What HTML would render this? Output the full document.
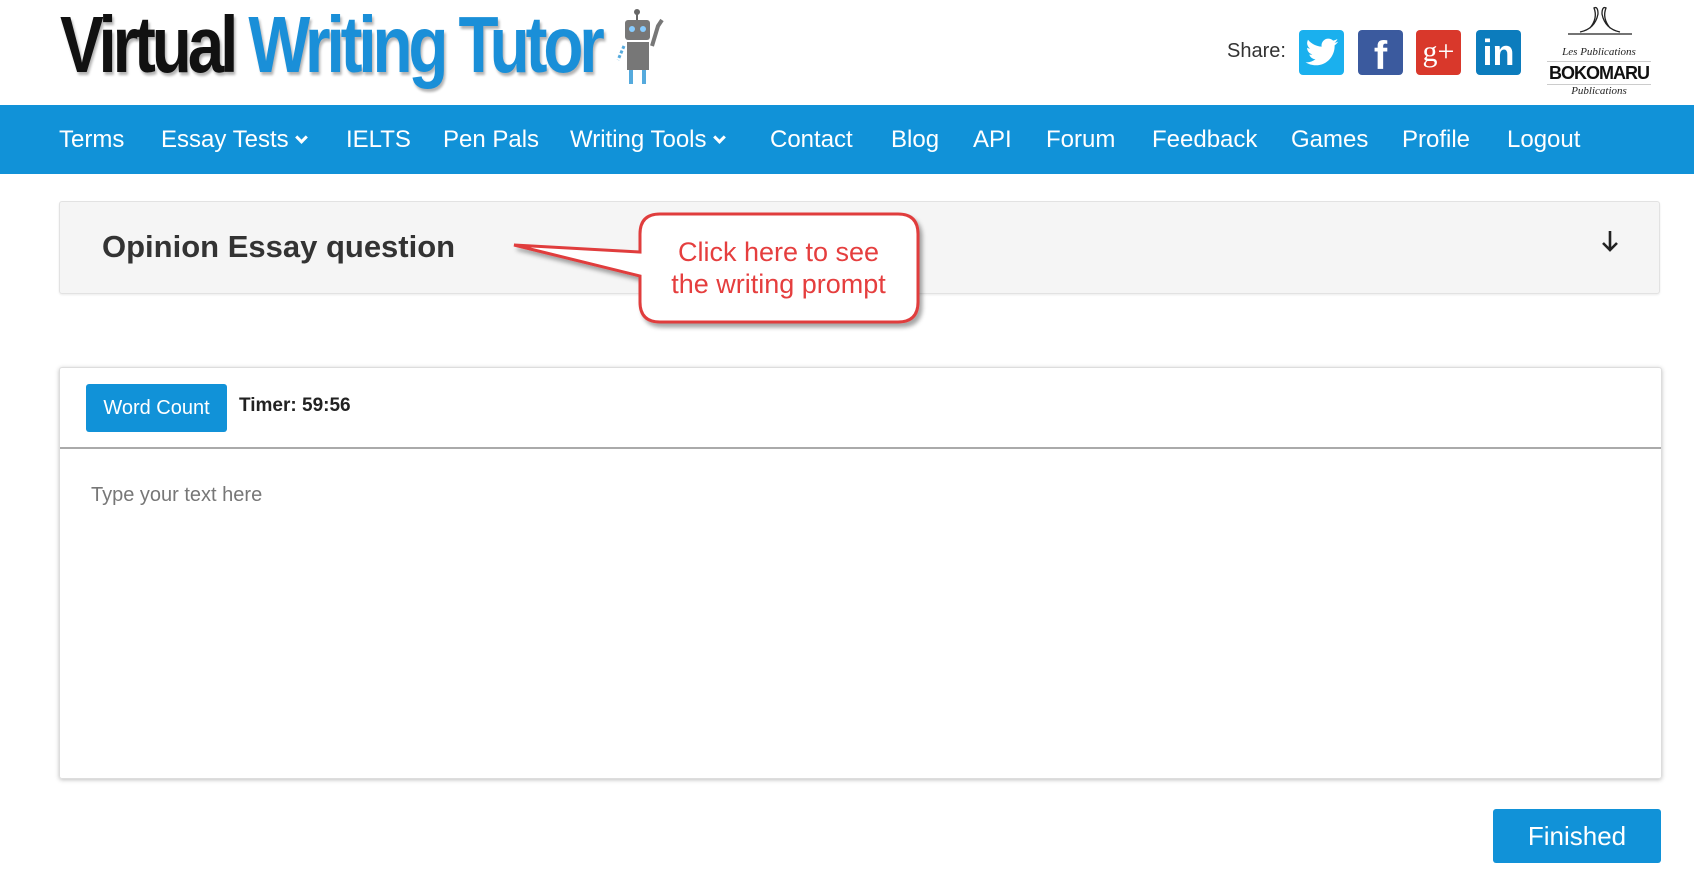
<!DOCTYPE html>
<html><head><meta charset="utf-8"><style>
*{margin:0;padding:0;box-sizing:border-box}
body{width:1694px;height:888px;background:#fff;font-family:"Liberation Sans",Arial,sans-serif;position:relative;overflow:hidden}
.abs{position:absolute}
.logo{left:60px;top:0px;font-weight:bold;font-size:80px;letter-spacing:-5px;white-space:nowrap;transform-origin:0 0;transform:scaleX(0.82);line-height:90px;text-shadow:2px 3px 3px rgba(0,0,0,.3)}
.nav{left:0;top:105px;width:1694px;height:69px;background:#1192d8}
.nav span{position:absolute;top:20px;color:#fff;font-size:24px;line-height:30px;white-space:nowrap}
.chev{display:inline-block;width:9px;height:9px;border-right:3px solid #fff;border-bottom:3px solid #fff;transform:rotate(45deg);margin-left:8px;position:relative;top:-5px}
.ico{top:30px;width:45px;height:45px;border-radius:4px;color:#fff;font-weight:bold;text-align:center}
</style></head><body>
<div class="abs logo"><span style="color:#111">Virtual</span> <span style="color:#1a8fd8">Writing Tutor</span></div>
<svg class="abs" style="left:612px;top:6px" width="54" height="80" viewBox="0 0 54 80">
<circle cx="25" cy="6" r="3" fill="#666"/><rect x="24" y="6" width="2" height="8" fill="#666"/>
<rect x="13" y="14" width="25" height="20" rx="3" fill="#777"/><circle cx="20" cy="23" r="3" fill="#8cf"/><circle cx="31" cy="23" r="3" fill="#8cf"/>
<rect x="15" y="36" width="22" height="28" fill="#777"/><path d="M40 40 L46 20 L50 14" stroke="#777" stroke-width="4" fill="none"/>
<path d="M12 40 L6 54" stroke="#5ad" stroke-width="3" stroke-dasharray="3 2"/>
<rect x="17" y="64" width="4" height="14" fill="#5ad"/><rect x="30" y="64" width="4" height="14" fill="#5ad"/>
</svg>
<div class="abs" style="left:1227px;top:40px;font-size:20px;color:#333">Share:</div>
<div class="abs ico" style="left:1299px;background:#1ab0ee;font-size:30px;line-height:45px">
<svg width="45" height="45" viewBox="0 0 24 24"><path fill="#fff" d="M19 8.2c0 .2 0 .3 0 .5 0 4.7-3.6 10.1-10.1 10.1-2 0-3.900-.6-5.4-1.6 2 .2 3.8-.5 5.3-1.6-1.5 0-2.9-1.1-3.3-2.5.6.1 1.1.1 1.6-.1-1.6-.3-2.8-1.8-2.8-3.5.5.3 1 .4 1.6.4-1.5-1-2-3-1.1-4.7 1.8 2.2 4.4 3.5 7.3 3.7-.5-2.2 1.3-4.3 3.5-4.300 1 0 1.9.4 2.6 1.1.8-.2 1.6-.5 2.3-.9-.3.8-.8 1.5-1.6 2 .7-.1 1.4-.3 2-.6-.5.8-1.1 1.4-1.9 2z"/></svg></div>
<div class="abs ico" style="left:1358px;background:#3b5a9e;font-size:40px;line-height:52px;font-family:'Liberation Sans';">f</div>
<div class="abs ico" style="left:1416px;background:#d9382b;font-size:30px;line-height:44px;font-weight:normal;font-family:'Liberation Serif'">g+</div>
<div class="abs ico" style="left:1476px;background:#0c7cbd;font-size:36px;line-height:46px">in</div>
<svg class="abs" style="left:1560px;top:4px" width="80" height="32" viewBox="0 0 80 32"><path d="M20 28 Q35 25 38 10 Q38 2 34 4 Q38 14 30 24 M60 28 Q45 25 42 10 Q42 2 46 4 Q42 14 50 24 M8 30 L72 30" stroke="#222" fill="none" stroke-width="1.3"/></svg>
<div class="abs" style="left:1547px;top:46px;width:104px;text-align:center;font-family:'Liberation Serif';font-style:italic;font-size:11px;color:#222">Les Publications</div>
<div class="abs" style="left:1547px;top:61px;width:104px;text-align:center;font-weight:bold;font-size:18px;color:#111;letter-spacing:-1px;border-top:1px solid #ccc;border-bottom:1px solid #ccc;line-height:22px">BOKOMARU</div>
<div class="abs" style="left:1547px;top:85px;width:104px;text-align:center;font-family:'Liberation Serif';font-style:italic;font-size:11px;color:#222">Publications</div>
<div class="abs nav">
<span style="left:59px">Terms</span>
<span style="left:161px">Essay Tests<i class="chev"></i></span>
<span style="left:346px">IELTS</span>
<span style="left:443px">Pen Pals</span>
<span style="left:570px">Writing Tools<i class="chev"></i></span>
<span style="left:770px">Contact</span>
<span style="left:891px">Blog</span>
<span style="left:973px">API</span>
<span style="left:1046px">Forum</span>
<span style="left:1152px">Feedback</span>
<span style="left:1291px">Games</span>
<span style="left:1402px">Profile</span>
<span style="left:1507px">Logout</span>
</div>
<div class="abs" style="left:59px;top:201px;width:1601px;height:93px;background:#f5f5f5;border:1px solid #e2e2e2;border-radius:3px;box-shadow:0 1px 2px rgba(0,0,0,.08)"></div>
<div class="abs" style="left:102px;top:229px;font-size:31px;font-weight:bold;color:#333">Opinion Essay question</div>
<svg class="abs" style="left:1600px;top:229px" width="20" height="24" viewBox="0 0 20 24"><path d="M10 2 V21 M3 14 L10 21 L17 14" stroke="#222" stroke-width="2.6" fill="none"/></svg>
<svg class="abs" style="left:510px;top:208px" width="420" height="124" viewBox="0 0 420 124">
<defs><filter id="s"><feDropShadow dx="3" dy="4" stdDeviation="2" flood-opacity=".35"/></filter></defs>
<path filter="url(#s)" d="M150 6 H388 Q408 6 408 26 V94 Q408 114 388 114 H150 Q130 114 130 94 V68 L4 37 L130 44 V26 Q130 6 150 6 Z" fill="#fff" stroke="#e03c3c" stroke-width="3"/>
</svg>
<div class="abs" style="left:640px;top:236px;width:277px;text-align:center;color:#e53e3e;font-size:27px;line-height:32px">Click here to see<br>the writing prompt</div>
<div class="abs" style="left:59px;top:367px;width:1603px;height:412px;border:1px solid #ddd;border-radius:3px;box-shadow:0 1px 4px rgba(0,0,0,.25)"></div>
<div class="abs" style="left:60px;top:447px;width:1601px;height:2px;background:#aaa"></div>
<div class="abs" style="left:86px;top:384px;width:141px;height:48px;background:#1192d8;border-radius:3px;color:#fff;font-size:20px;line-height:48px;text-align:center">Word Count</div>
<div class="abs" style="left:239px;top:395px;font-size:19px;font-weight:bold;color:#222">Timer: 59:56</div>
<div class="abs" style="left:91px;top:484px;font-size:20px;color:#777">Type your text here</div>
<div class="abs" style="left:1493px;top:809px;width:168px;height:54px;background:#1192d8;border-radius:3px;color:#fff;font-size:26px;line-height:54px;text-align:center">Finished</div>
</body></html>
